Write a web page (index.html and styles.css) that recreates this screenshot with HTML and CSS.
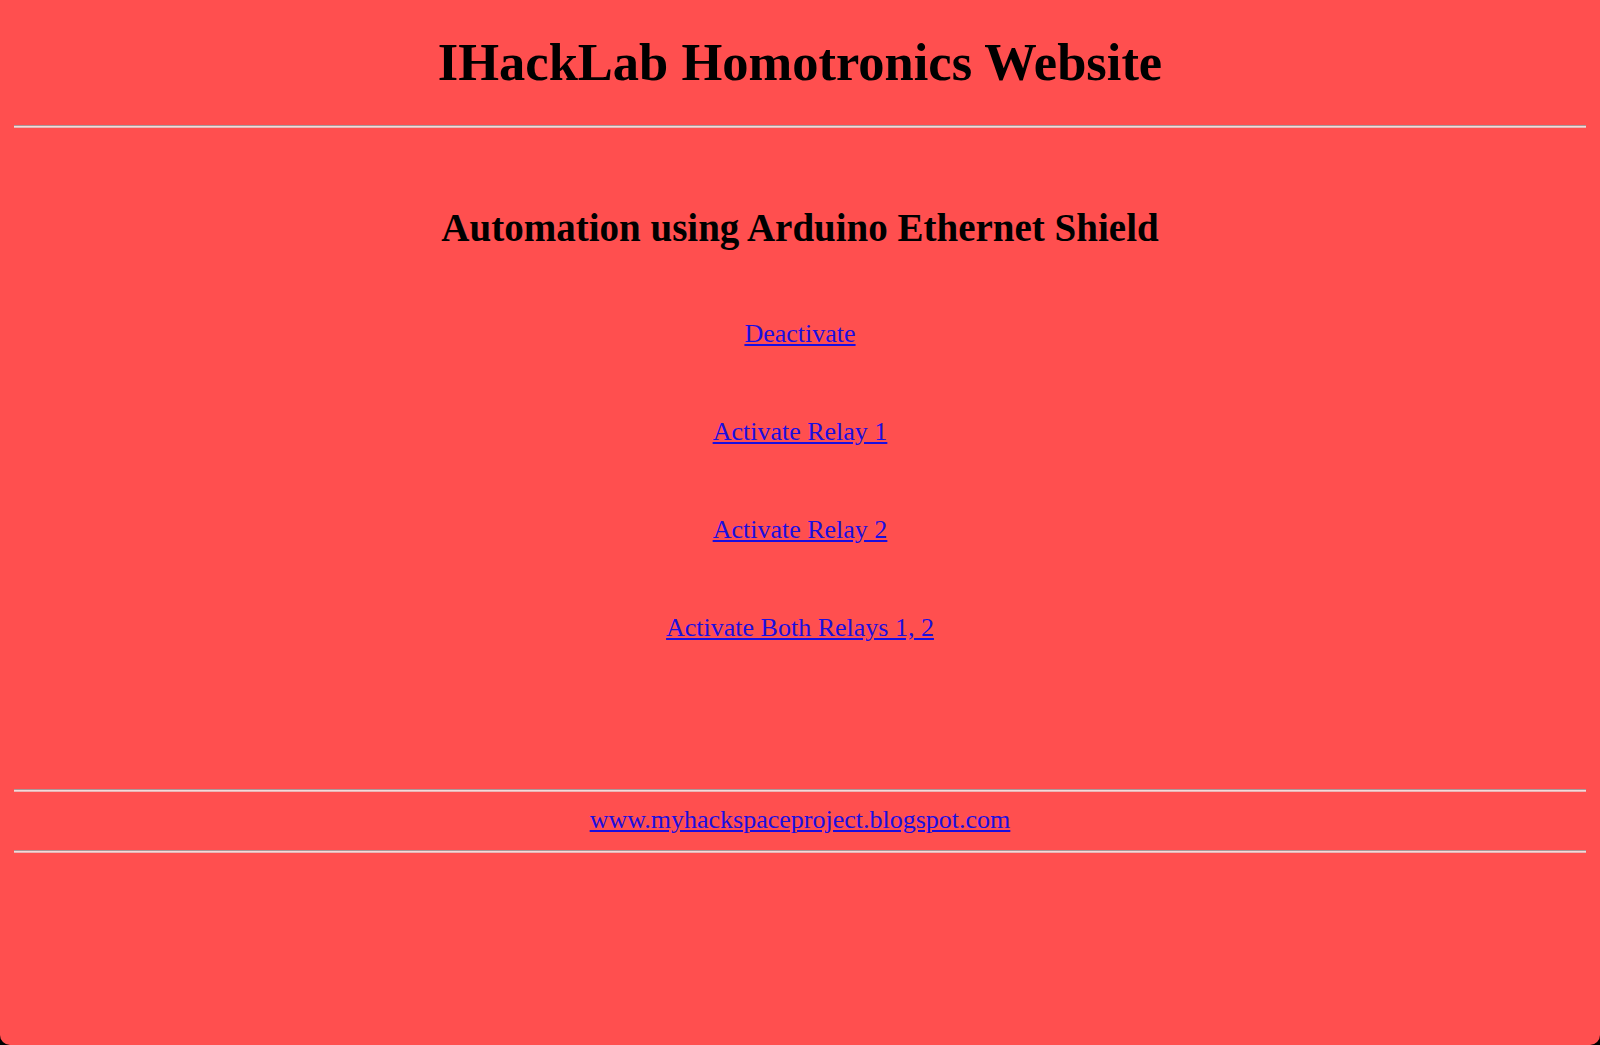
FILE: index.html
```html
<!DOCTYPE html>
<html>
<head>
<meta charset="utf-8">
<title>IHackLab Homotronics Website</title>
<link rel="stylesheet" href="styles.css">
</head>
<body>
<div class="page">
  <h1 class="title">IHackLab Homotronics Website</h1>
  <hr class="rule rule-top">
  <h2 class="subtitle">Automation using Arduino Ethernet Shield</h2>
  <div class="links">
    <a class="link" href="#">Deactivate</a>
    <a class="link" href="#">Activate Relay 1</a>
    <a class="link" href="#">Activate Relay 2</a>
    <a class="link" href="#">Activate Both Relays 1, 2</a>
  </div>
  <hr class="rule rule-mid">
  <div class="footer"><a class="link" href="#">www.myhackspaceproject.blogspot.com</a></div>
  <hr class="rule rule-bottom">
</div>
</body>
</html>
```

FILE: styles.css
```css
html {
  margin: 0;
  padding: 0;
  background: #000;
}
body {
  margin: 0;
  padding: 0;
  background: #ff4f4f;
  min-height: 1045px;
  border-radius: 0 0 10px 10px;
  font-family: "Liberation Serif", "Times New Roman", serif;
  color: #000;
}
.page {
  padding: 32px 14px 0 14px;
  display: flex;
  flex-direction: column;
  align-items: stretch;
  text-align: center;
}
.title {
  margin: 0;
  font-size: 52.5px;
  line-height: 60px;
  font-weight: bold;
}
.rule {
  margin: 0;
  height: 1px;
  border: 0;
  background: #f6d8d8;
  border-top: 1px solid #a89898;
  border-bottom: 1px solid #e8b4b4;
}
.rule-top {
  margin-top: 33px;
}
.subtitle {
  margin: 77px 0 0 0;
  font-size: 39px;
  line-height: 45px;
  font-weight: bold;
}
.links {
  margin-top: 69px;
  display: flex;
  flex-direction: column;
  align-items: center;
  gap: 68px;
}
.link {
  font-size: 26px;
  line-height: 30px;
  color: #1a0ee0;
  text-decoration: underline;
}
.rule-mid {
  margin-top: 146px;
}
.footer {
  margin-top: 13px;
  height: 30px;
  line-height: 30px;
}
.rule-bottom {
  margin-top: 15px;
}
```
